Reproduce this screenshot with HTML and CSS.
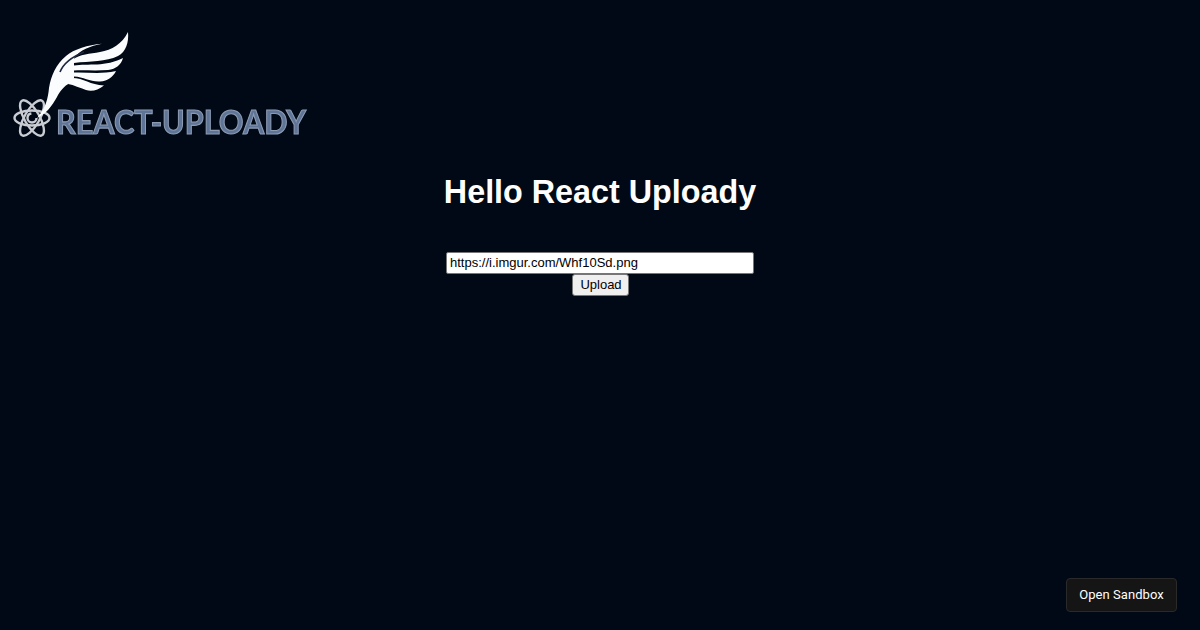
FILE: index.html
```html
<!DOCTYPE html>
<html lang="en">
<head>
    <meta charset="utf-8">
    <title>Hello React Uploady</title>
    <link rel="stylesheet" href="styles.css">
</head>
<body>
    <div class="logo">
        <svg width="360" height="130" viewBox="0 20 360 130" role="img" aria-label="React-Uploady">
            <defs>
                <filter id="soft" x="-10%" y="-10%" width="120%" height="120%"><feGaussianBlur stdDeviation="0.6"/></filter>
                <filter id="softer" x="-5%" y="-20%" width="110%" height="140%"><feGaussianBlur stdDeviation="0.45"/></filter>
            </defs>
            <g class="atom" filter="url(#softer)">
                <ellipse cx="32" cy="118" rx="17.5" ry="7.5"/>
                <ellipse cx="32" cy="118" rx="20" ry="7.5" transform="rotate(60 32 118)"/>
                <ellipse cx="32" cy="118" rx="20" ry="7.5" transform="rotate(120 32 118)"/>
                <circle cx="32" cy="118" r="4.5" stroke-dasharray="20 8"/>
            </g>
            <g class="wing" filter="url(#soft)">
                <path d="M102 43.7 C88 45 74 49 66 56 C56 64 51 76 49 88 C48 98 46 108 37 118 C46 114 52 106 57 97 C60 91 64 86 70 83 L74 78 L74 58 C80 50 90 46 102 43.7 Z"/>
                <path d="M72 60 C80 54 90 54 100 52 C112 50 122 44 128 32 C129 42 126 52 118 56 C106 62 90 61 74 63 Z"/>
                <path d="M74 65.5 C88 63.5 106 67 123 58 C121 65 116 69 108 70 C96 71 85 70 74 70.5 Z"/>
                <path d="M74 72.5 C88 72 100 74.5 116 71 C113 77 108 81 100 81.5 C90 82 84 77 74 76.5 Z"/>
                <path d="M72 78 C84 78 90 85 104 85.5 C98 90 92 92 86 90 C80 88 74 85 68 84 Z"/>
                <path class="wing-line" d="M84 52 C74 56 64 62 60 72"/>
            </g>
            <text class="logo-text" x="56" y="134" textLength="250" lengthAdjust="spacingAndGlyphs" filter="url(#softer)">REACT-UPLOADY</text>
        </svg>
    </div>

    <div class="app">
        <h1>Hello React Uploady</h1>
        <div class="upload-form">
            <input type="text" class="url-input" value="https://i.imgur.com/Whf10Sd.png">
            <button type="button" class="upload-btn">Upload</button>
        </div>
    </div>

    <button type="button" class="sandbox-btn">Open Sandbox</button>
</body>
</html>
```

FILE: styles.css
```css
html, body {
    height: 100%;
}

body {
    margin: 0;
    background: #000915;
    color: #fff;
    font-family: "Liberation Sans", Arial, sans-serif;
    overflow: hidden;
}

.logo {
    height: 130px;
    padding-top: 20px;
}

.logo svg {
    display: block;
}

.wing {
    fill: #fbfcfe;
}

.wing-line {
    fill: none;
    stroke: #1c2740;
    stroke-width: 1.6;
}

.atom {
    fill: none;
    stroke: #c9ccd2;
    stroke-width: 2.4;
}

.logo-text {
    font-family: Lato, "Open Sans", sans-serif;
    font-size: 33px;
    font-weight: 700;
    fill: #5f7598;
    stroke: #8d9bb2;
    stroke-width: 1.1;
}

.app {
    text-align: center;
}

h1 {
    margin: 24px 0 41px;
    font-size: 32.3px;
    line-height: 37px;
}

.upload-form {
    display: flex;
    flex-direction: column;
    align-items: center;
}

.url-input {
    box-sizing: border-box;
    width: 308px;
    height: 22px;
    padding: 0 3px 2px;
    border: 1px solid #767676;
    border-radius: 2px;
    background: #fff;
    color: #000;
    font: 13px "Liberation Sans", Arial, sans-serif;
}

.upload-btn {
    box-sizing: border-box;
    width: 57px;
    height: 22px;
    padding: 0 5px 2px 7px;
    border: 1px solid #767676;
    border-radius: 3px;
    background: #efefef;
    color: #000;
    font: 13px "Liberation Sans", Arial, sans-serif;
}

.sandbox-btn {
    position: fixed;
    right: 23px;
    bottom: 18px;
    box-sizing: border-box;
    width: 111px;
    height: 34px;
    padding: 0 0 2px;
    border: 1px solid #2a2a2a;
    border-radius: 4px;
    background: #151515;
    color: #fff;
    font: 13px Roboto, Arial, sans-serif;
    letter-spacing: 0.05px;
}
```
